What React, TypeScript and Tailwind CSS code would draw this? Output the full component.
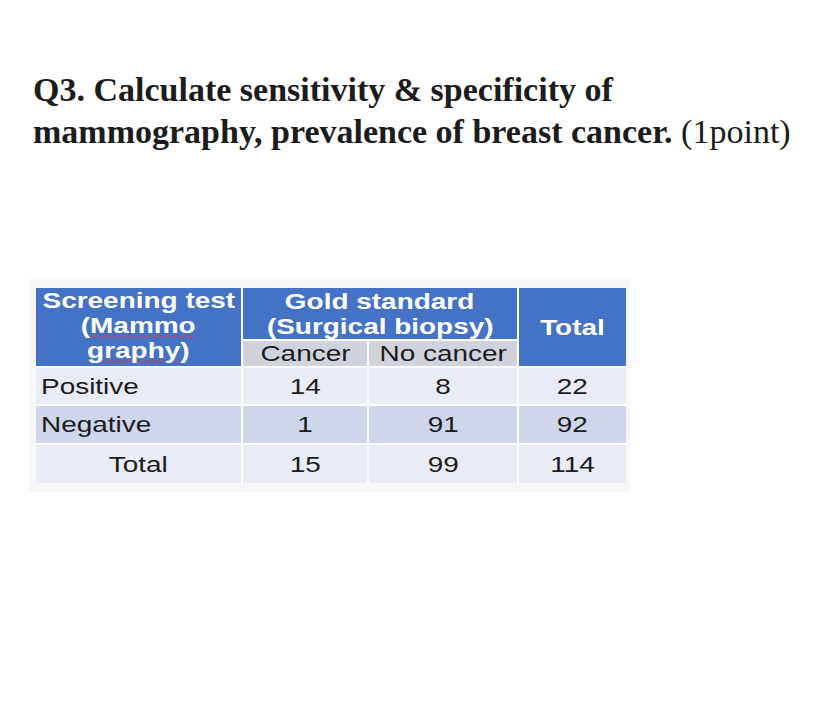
import type { ReactNode } from 'react';

// the table in the slide is a pasted picture, stretched sideways
function Wide({ children, left = false }: { children: ReactNode; left?: boolean }) {
  return (
    <span className={`inline-block whitespace-nowrap scale-x-[1.27] ${left ? 'origin-left' : 'origin-center'}`}>
      {children}
    </span>
  );
}

const rows = [
  { label: 'Positive', a: '14', b: '8', t: '22', bg: 'bg-[#e9ebf5]', left: true },
  { label: 'Negative', a: '1', b: '91', t: '92', bg: 'bg-[#cfd5ea]', left: true },
  { label: 'Total', a: '15', b: '99', t: '114', bg: 'bg-[#e9ebf5]', left: false },
];

export default function App() {
  const head = 'bg-[#4472c4] text-white font-bold flex flex-col items-center justify-center leading-[25px]';
  const sub = 'bg-[#d0d3dc] flex items-center justify-center';
  const squiggle = 'underline decoration-wavy decoration-red-500/70 decoration-1 underline-offset-1';

  return (
    <div className="w-[828px] h-[706px] bg-white text-[#1c1c1c] overflow-hidden">
      <div className="pt-[69px] pl-[33px] font-['Liberation_Serif',serif] text-[34px] leading-[42px]">
        <p className="font-bold">Q3. Calculate sensitivity &amp; specificity of</p>
        <p>
          <span className="font-bold">mammography, prevalence of breast cancer.</span> (1point)
        </p>
      </div>

      <div className="mt-[125px] ml-[30px] w-[600px] bg-[#f7f7f9] pt-[10px] pl-[6px] pb-[9px] font-['Liberation_Sans',Arial,sans-serif] text-[22px]">
        <div className="grid w-fit grid-cols-[205px_124px_148px_107px] grid-rows-[51px_25px_36px_37px_38px] gap-[2px] bg-white">
          <div className={`${head} row-span-2 pb-[3px]`}>
            <Wide>Screening test</Wide>
            <Wide>
              (<span className={squiggle}>Mammo</span>
            </Wide>
            <Wide>
              <span className={squiggle}>graphy</span>)
            </Wide>
          </div>
          <div className={`${head} col-span-2`}>
            <Wide>Gold standard</Wide>
            <Wide>(Surgical biopsy)</Wide>
          </div>
          <div className={`${head} row-span-2`}>
            <Wide>Total</Wide>
          </div>
          <div className={sub}>
            <Wide>Cancer</Wide>
          </div>
          <div className={sub}>
            <Wide>No cancer</Wide>
          </div>

          {rows.map(r => (
            <div key={r.label} className="contents">
              <div className={`${r.bg} flex items-center ${r.left ? 'justify-start pl-[5px]' : 'justify-center'}`}>
                <Wide left={r.left}>{r.label}</Wide>
              </div>
              <div className={`${r.bg} flex items-center justify-center`}>
                <Wide>{r.a}</Wide>
              </div>
              <div className={`${r.bg} flex items-center justify-center`}>
                <Wide>{r.b}</Wide>
              </div>
              <div className={`${r.bg} flex items-center justify-center`}>
                <Wide>{r.t}</Wide>
              </div>
            </div>
          ))}
        </div>
      </div>
    </div>
  );
}
